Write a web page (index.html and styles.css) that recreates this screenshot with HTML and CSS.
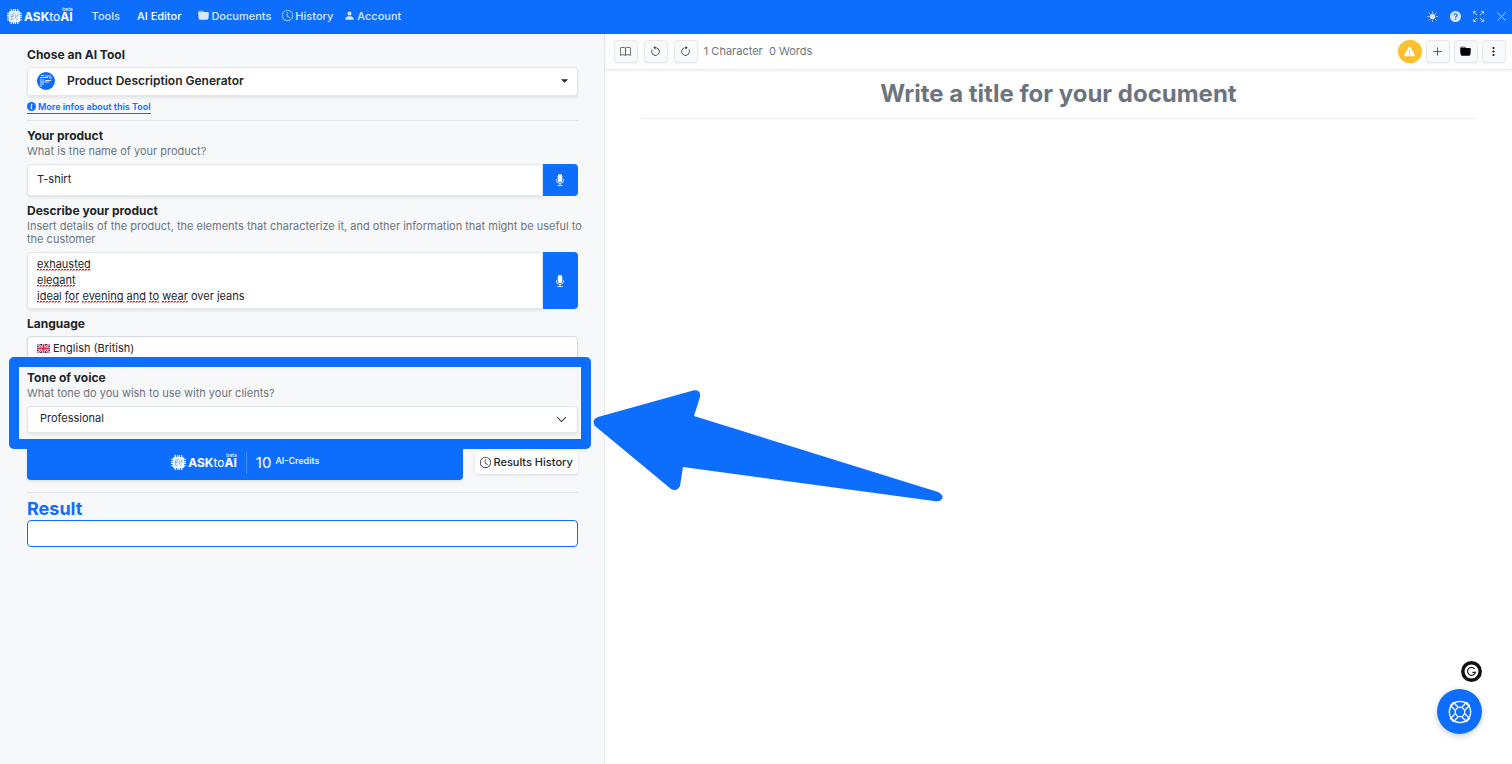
FILE: index.html
```html
<!doctype html>
<html lang="en">
<head>
	<meta charset="utf-8">
	<meta name="viewport" content="width=device-width, initial-scale=1.0">
	<title>AI Editor - ASKtoAI</title>
	<link rel="stylesheet" href="styles.css">
</head>

<body>

	<!-- shared icons -->
	<svg class="sprite" aria-hidden="true">
		<symbol id="i-chip" viewBox="0 0 16 16">
			<path fill="none" stroke="currentColor" stroke-width="1.2" d="M4.5 0v16M7 0v3M9 0v3M11.500 0v16M7 13v3M9 13v3M0 4.500h16M0 7h3M0 9h3M13 7h3M13 9h3M0 11.500h16"/>
			<rect x="2" y="2" width="12" height="12" rx="2" fill="currentColor"/>
			<path fill="none" stroke="#0d6efd" stroke-width=".6" d="M4.500 5v6h3M4.500 8h2V4.500h2M8 6.500h1.500v3H8M11.500 4.500v4M11.500 11h-2"/>
		</symbol>
		<symbol id="i-clock" viewBox="0 0 16 16">
			<path fill="currentColor" d="M8 3.500a.5.5 0 0 0-1 0V9a.5.5 0 0 0 .252.434l3.500 2a.5.5 0 0 0 .496-.868L8 8.710V3.500z"/>
			<path fill="currentColor" d="M8 16A8 8 0 1 0 8 0a8 8 0 0 0 0 16zm7-8A7 7 0 1 1 1 8a7 7 0 0 1 14 0z"/>
		</symbol>
		<symbol id="i-folder" viewBox="0 0 16 16">
			<path fill="currentColor" d="M9.828 3h3.982a2 2 0 0 1 1.992 2.181l-.637 7A2 2 0 0 1 13.174 14H2.825a2 2 0 0 1-1.991-1.819l-.637-7a2 2 0 0 1 .342-1.310L.5 3a2 2 0 0 1 2-2h3.672a2 2 0 0 1 1.414.586l.828.828A2 2 0 0 0 9.828 3zm-8.322.120C1.720 3.042 1.950 3 2.190 3h5.396l-.707-.707A1 1 0 0 0 6.172 2H2.500a1 1 0 0 0-1 .981l.006.139z"/>
		</symbol>
		<symbol id="i-mic" viewBox="0 0 16 16">
			<path fill="currentColor" d="M5 3a3 3 0 0 1 6 0v5a3 3 0 0 1-6 0V3z"/>
			<path fill="currentColor" d="M3.500 6.500A.5.5 0 0 1 4 7v1a4 4 0 0 0 8 0V7a.5.5 0 0 1 1 0v1a5 5 0 0 1-4.500 4.975V15h3a.5.5 0 0 1 0 1h-7a.5.5 0 0 1 0-1h3v-2.025A5 5 0 0 1 3 8V7a.5.5 0 0 1 .5-.5z"/>
		</symbol>
		<symbol id="i-rotate" viewBox="0 0 16 16">
			<path fill="currentColor" fill-rule="evenodd" d="M8 3a5 5 0 1 1-4.546 2.914.5.5 0 0 0-.908-.417A6 6 0 1 0 8 2v1z"/>
			<path fill="currentColor" d="M8 4.466V.534a.25.25 0 0 0-.410-.192L5.230 2.308a.25.25 0 0 0 0 .384l2.360 1.966A.25.25 0 0 0 8 4.466z"/>
		</symbol>
	</svg>

	<header class="topbar">
		<a class="logo" href="#">
			<svg class="logo-chip"><use href="#i-chip"/></svg>
			<span class="logo-text"><b>ASK</b>to<b>AI</b><small>beta</small></span>
		</a>
		<nav>
			<a href="#">Tools</a>
			<a href="#" class="active">AI Editor</a>
			<a href="#"><svg class="icon"><use href="#i-folder"/></svg>Documents</a>
			<a href="#"><svg class="icon"><use href="#i-clock"/></svg>History</a>
			<a href="#"><svg class="icon" viewBox="0 0 16 16"><path fill="currentColor" d="M3 14s-1 0-1-1 1-4 6-4 6 3 6 4-1 1-1 1H3zm5-6a3 3 0 1 0 0-6 3 3 0 0 0 0 6z"/></svg>Account</a>
		</nav>
		<div class="window-tools">
			<button type="button" aria-label="Light mode">
				<svg class="icon" viewBox="0 0 16 16"><circle cx="8" cy="8" r="4" fill="currentColor"/><path fill="none" stroke="currentColor" stroke-linecap="round" d="M8 .5v2M8 13.500v2M.5 8h2M13.500 8h2M2.700 2.700l1.400 1.400M11.900 11.900l1.400 1.400M13.300 2.700l-1.400 1.400M4.100 11.900l-1.400 1.400"/></svg>
			</button>
			<button type="button" aria-label="Help">
				<svg class="icon" viewBox="0 0 16 16"><circle cx="8" cy="8" r="8" fill="currentColor"/><path fill="none" stroke="#0d6efd" stroke-width="1.800" d="M5.800 6.200c0-3 4.500-2.800 4.500-.2 0 1.600-2.200 1.500-2.200 3.500"/><circle cx="8.100" cy="11.600" r="1.100" fill="#0d6efd"/></svg>
			</button>
			<button type="button" aria-label="Full screen">
				<svg class="icon" viewBox="0 0 16 16"><path fill="none" stroke="currentColor" stroke-width="1.200" d="M.6 4.500V.6h3.900M.8.8l5 5M11.500.6h3.900v3.900M15.200.8l-5 5M.6 11.500v3.900h3.900M.8 15.200l5-5M15.400 11.500v3.900h-3.900M15.200 15.200l-5-5"/></svg>
			</button>
			<button type="button" aria-label="Close">
				<svg class="icon" viewBox="0 0 16 16"><path fill="none" stroke="currentColor" stroke-width="1.200" stroke-linecap="round" d="M2.500 2.500l11 11M13.500 2.500l-11 11"/></svg>
			</button>
		</div>
	</header>

	<main>
		<form class="panel">
			<section class="tool-select">
				<h2>Chose an AI Tool</h2>
				<button type="button" class="tool-button box">
					<svg class="tool-icon" viewBox="0 0 18 18"><circle cx="9" cy="9" r="9" fill="#0d6efd"/><path fill="none" stroke="#cfe2ff" d="M4 3.500h3M8 4h6M3 5.500h8M12 6h3M3 8h4M8 8.500h6M3 10h9M3 12h4M3 14h2"/></svg>
					<span>Product Description Generator</span>
					<svg class="caret" viewBox="0 0 8 4"><path fill="currentColor" d="M0 0h8L4 4z"/></svg>
				</button>
				<a class="more" href="#"><svg viewBox="0 0 16 16"><circle cx="8" cy="8" r="8" fill="currentColor"/><path fill="none" stroke="#fff" stroke-width="1.800" d="M6.500 7h1.700L7.500 12h1.800"/><circle cx="8.500" cy="4.400" r="1.200" fill="#fff"/></svg> More infos about this Tool</a>
			</section>

			<section class="field">
				<label for="product">Your product</label>
				<p>What is the name of your product?</p>
				<div class="input-group">
					<input class="box" type="text" id="product" value="T-shirt">
					<button type="button" aria-label="Dictate name"><svg class="icon"><use href="#i-mic"/></svg></button>
				</div>
			</section>

			<section class="field">
				<label for="details">Describe your product</label>
				<p>Insert details of the product, the elements that characterize it, and other information that might be useful to the customer</p>
				<div class="input-group">
					<textarea class="box" id="details" rows="3" spellcheck="false">exhausted
elegant
ideal for evening and to wear over jeans</textarea>
					<button type="button" aria-label="Dictate description"><svg class="icon"><use href="#i-mic"/></svg></button>
				</div>
			</section>

			<section class="field language">
				<label for="language">Language</label>
				<div class="flag-select box">
					<svg class="flag" viewBox="0 0 13 9"><rect width="13" height="9" rx="1" fill="#2b3f87"/><path stroke="#fff" stroke-width="2" d="M0 0l13 9M13 0L0 9"/><path stroke="#d32f45" stroke-width=".9" d="M0 0l13 9M13 0L0 9"/><path stroke="#fff" stroke-width="3" d="M6.500 0v9M0 4.500h13"/><path stroke="#d32f45" stroke-width="1.800" d="M6.500 0v9M0 4.500h13"/></svg>
					<select id="language"><option>English (British)</option></select>
				</div>
			</section>

			<section class="field tone">
				<label for="tone">Tone of voice</label>
				<p>What tone do you wish to use with your clients?</p>
				<select class="box" id="tone"><option>Professional</option></select>
				<svg class="arrow" viewBox="0 0 350 112" aria-hidden="true"><path d="M5 27L101 .3Q108-.5 107 7L101 26L345 102Q351 105 349 109Q347 112 341 111L90 77L87 96Q84 102 78 99L2 36Q-2 30 5 27z"/></svg>
			</section>

			<div class="actions">
				<button type="submit" class="ask">
					<span class="logo">
						<svg class="logo-chip"><use href="#i-chip"/></svg>
						<span class="logo-text"><b>ASK</b>to<b>AI</b><small>beta</small></span>
					</span>
					<span class="credits">10 <small>AI-Credits</small></span>
				</button>
				<button type="button" class="results"><svg class="icon"><use href="#i-clock"/></svg>Results History</button>
			</div>

			<section class="result">
				<h3><label for="result">Result</label></h3>
				<input type="text" id="result">
			</section>
		</form>

		<section class="editor">
			<div class="toolbar">
				<div class="tools-left">
					<button type="button" aria-label="Read"><svg class="icon" viewBox="0 0 16 16"><path fill="none" stroke="currentColor" d="M8 3C6.500 1.700 2.500 1.800.5 2.800v10.700C3 12.500 6.500 12.300 8 13.700c1.500-1.400 5-1.200 7.500-.2V2.800C13.500 1.800 9.500 1.700 8 3zV13.500"/></svg></button>
					<button type="button" aria-label="Undo"><svg class="icon"><use href="#i-rotate"/></svg></button>
					<button type="button" aria-label="Redo"><svg class="icon flip"><use href="#i-rotate"/></svg></button>
					<span class="count">1 Character&nbsp; 0 Words</span>
				</div>
				<div class="tools-right">
					<button type="button" class="warning" aria-label="Warning"><svg class="icon" viewBox="0 0 16 16"><path fill="currentColor" fill-rule="evenodd" d="M8.982 1.566a1.130 1.130 0 0 0-1.960 0L.165 13.233c-.457.778.091 1.767.980 1.767h13.713c.889 0 1.438-.990.980-1.767L8.982 1.566zM8 5c.535 0 .954.462.900.995l-.350 3.507a.552.552 0 0 1-1.100 0L7.100 5.995A.905.905 0 0 1 8 5zm.002 6a1 1 0 1 1 0 2 1 1 0 0 1 0-2z"/></svg></button>
					<button type="button" aria-label="New"><svg class="icon" viewBox="0 0 16 16"><path stroke="currentColor" d="M8 2v12M2 8h12"/></svg></button>
					<button type="button" aria-label="Open"><svg class="icon dark"><use href="#i-folder"/></svg></button>
					<button type="button" aria-label="More"><svg class="icon dark" viewBox="0 0 16 16"><circle cx="8" cy="3" r="1.500"/><circle cx="8" cy="8" r="1.500"/><circle cx="8" cy="13" r="1.500"/></svg></button>
				</div>
			</div>
			<input class="doc-title" type="text" placeholder="Write a title for your document" aria-label="Document title">
		</section>
	</main>

	<div class="floating">
		<button type="button" class="grammar" aria-label="Grammar check"><svg viewBox="0 0 21 21"><circle cx="10.500" cy="10.500" r="8.700" fill="#fff" stroke="#111" stroke-width="3.500"/><path fill="none" stroke="#222" stroke-width="1.200" d="M13.600 7.800a4 4 0 1 0 .8 3.500h-3"/></svg></button>
		<button type="button" class="support" aria-label="Support"><svg viewBox="0 0 24 24"><g fill="none" stroke="currentColor" stroke-width="1.300"><circle cx="12" cy="12" r="10.700"/><circle cx="12" cy="12" r="4.800"/><path d="M7 10L2.500 5.500l3-3L10 7M14 7l4.500-4.500 3 3L17 10M17 14l4.500 4.500-3 3L14 17M10 17l-4.500 4.500-3-3L7 14"/></g></svg></button>
	</div>

</body>
</html>
```
FILE: styles.css
```css
* {
	box-sizing: border-box;
}
body {
	margin: 0;
	min-height: 100vh;
	display: flex;
	flex-direction: column;
	font-family: Inter, sans-serif;
	font-size: 11px;
	color: #212529;
	background: #fff;
}
h2, h3, p {
	margin: 0;
}
button, input, select, textarea {
	font: inherit;
	color: inherit;
	margin: 0;
}
button {
	border: 0;
	padding: 0;
	background: none;
	cursor: pointer;
}
svg {
	flex: none;
}
.sprite {
	position: absolute;
	width: 0;
	height: 0;
}
.icon {
	width: 11px;
	height: 11px;
}

/* top bar */
.topbar {
	display: flex;
	align-items: center;
	height: 34px;
	padding: 0 5px 1px 7px;
	background: #0d6efd;
	color: #fff;
}
.logo {
	display: flex;
	align-items: center;
	gap: 2px;
	color: #fff;
	text-decoration: none;
}
.logo-chip {
	width: 15px;
	height: 15px;
}
.logo-text {
	position: relative;
	font-size: 12px;
	line-height: 16px;
}
.logo-text small {
	position: absolute;
	right: 0;
	top: -4px;
	font-size: 5px;
	line-height: 8px;
}
nav {
	display: flex;
	gap: 11px;
	margin-left: 19px;
	padding-bottom: 2px;
}
nav a {
	display: flex;
	align-items: center;
	gap: 2px;
	color: #d7e6ff;
	font-weight: 500;
	text-decoration: none;
}
nav a.active {
	color: #fff;
	margin: 0 6px;
}
.window-tools {
	display: flex;
	gap: 12px;
	margin-left: auto;
	color: #d7e6ff;
}
.window-tools button {
	display: flex;
}

main {
	flex: 1;
	display: grid;
	grid-template-columns: 2fr 3fr;
}

/* left side */
.panel {
	padding: 13px 26px 13px 27px;
	background: #f7f8fa;
	border-right: 1px solid #e6e8eb;
}
.box {
	display: block;
	width: 100%;
	border: 1px solid #e4e7ea;
	border-radius: 4px;
	background: #fff;
	box-shadow: 0 2px 3px rgba(0, 0, 0, .08);
}
h2, .field label {
	display: block;
	font-size: 12px;
	font-weight: 700;
	line-height: 15px;
}
.field p {
	color: #6c757d;
	line-height: 13px;
	margin: 2px -10px 0 0;
}
.tool-select {
	padding-bottom: 6px;
	margin-bottom: 7px;
	border-bottom: 1px solid #e3e5e8;
}
.tool-button {
	display: flex;
	align-items: center;
	height: 29px;
	margin: 5px 0 4px;
	padding: 0 9px 2px;
	font-size: 12px;
	font-weight: 600;
}
.tool-icon {
	width: 18px;
	height: 18px;
	margin-right: 12px;
}
.caret {
	width: 7px;
	height: 4px;
	margin-left: auto;
}
.more {
	display: inline-flex;
	align-items: center;
	gap: 2px;
	color: #0d6efd;
	font-size: 9px;
	font-weight: 600;
	line-height: 12px;
	text-decoration: none;
	border-bottom: 1px solid #0d6efd;
}
.more svg {
	width: 9px;
	height: 9px;
}
.field {
	margin-bottom: 7px;
}
.input-group {
	display: flex;
	margin-top: 6px;
}
.input-group .box {
	flex: 1;
	border-radius: 4px 0 0 4px;
	padding: 3px 9px 5px;
	line-height: 16px;
}
.input-group input {
	height: 32px;
}
.input-group textarea {
	height: 57px;
	resize: none;
	overflow: hidden;
	/* spelling marks */
	background: #fff url("data:image/svg+xml,%3Csvg xmlns='http://www.w3.org/2000/svg' width='220' height='56'%3E%3Cg fill='none' stroke='%23e02020' stroke-dasharray='2 1'%3E%3Cpath d='M9 16.500h54M9 32.500h38M9 48.500h24M37 48.500h14M54 48.500h42M99 48.500h19M121 48.500h10M134 48.500h26'/%3E%3Cpath stroke-dashoffset='1' stroke-opacity='.5' d='M9 17.500h54M9 33.500h38M9 49.500h24M37 49.500h14M54 49.500h42M99 49.500h19M121 49.500h10M134 49.500h26'/%3E%3C/g%3E%3C/svg%3E") no-repeat;
}
.input-group button {
	display: flex;
	align-items: center;
	justify-content: center;
	width: 35px;
	color: #fff;
	background: #0d6efd;
	border-radius: 0 4px 4px 0;
}
.input-group .icon {
	width: 12px;
	height: 12px;
}
.flag-select {
	display: flex;
	align-items: center;
	gap: 3px;
	height: 27px;
	margin-top: 5px;
	padding: 0 9px 3px;
	border-color: #d5dbe5;
}
.flag {
	width: 13px;
	height: 9px;
}
.flag-select select {
	flex: 1;
	border: 0;
	padding: 0;
	background: none;
	appearance: none;
}

/* highlighted field */
.tone {
	position: relative;
	margin: 0 0 12px;
}
.tone::after {
	content: "";
	position: absolute;
	inset: -13px -13px -16px -18px;
	border: 10px solid #0d6efd;
	border-radius: 5px;
	pointer-events: none;
}
.tone select {
	height: 27px;
	margin-top: 6px;
	padding: 0 12px 3px;
	appearance: none;
	background: #fff url("data:image/svg+xml,%3Csvg xmlns='http://www.w3.org/2000/svg' viewBox='0 0 16 16'%3E%3Cpath fill='none' stroke='%23343a40' stroke-width='1.500' stroke-linecap='round' stroke-linejoin='round' d='M2 5l6 6 6-6'/%3E%3C/svg%3E") no-repeat right 10px center / 11px 11px;
}
.arrow {
	position: absolute;
	left: calc(100% + 15px);
	top: 20px;
	width: 350px;
	height: 112px;
	overflow: visible;
	fill: #0d6efd;
	z-index: 2;
	pointer-events: none;
}

.actions {
	display: flex;
	align-items: center;
	gap: 12px;
	padding-bottom: 12px;
	border-bottom: 1px solid #e3e5e8;
}
.ask {
	flex: 1;
	display: flex;
	align-items: center;
	justify-content: center;
	height: 35px;
	color: #fff;
	background: #0d6efd;
	border-radius: 4px;
	box-shadow: 0 2px 3px rgba(0, 0, 0, .08);
}
.credits {
	display: flex;
	gap: 4px;
	margin-left: 9px;
	padding-left: 9px;
	border-left: 1px solid #4b93ff;
	font-size: 15px;
	line-height: 22px;
}
.credits small {
	font-size: 9px;
	line-height: 18px;
	font-weight: 500;
}
.results {
	display: flex;
	align-items: center;
	gap: 2px;
	height: 23px;
	padding: 0 5px 1px;
	font-weight: 500;
	background: #fff;
	border-radius: 4px;
	box-shadow: 0 1px 3px rgba(0, 0, 0, .12);
}
.result h3 {
	margin-top: 5px;
	color: #0d6efd;
	font-size: 18px;
	line-height: 22px;
}
.result input {
	display: block;
	width: 100%;
	height: 27px;
	padding: 0 9px;
	border: 1px solid #0d6efd;
	border-radius: 4px;
	background: #fff;
}

/* right side */
.toolbar {
	display: flex;
	align-items: center;
	justify-content: space-between;
	height: 36px;
	padding: 0 6px 1px 9px;
	border-bottom: 1px solid #e9ebed;
	box-shadow: 0 1px 3px rgba(0, 0, 0, .06);
}
.tools-left, .tools-right {
	display: flex;
	align-items: center;
	gap: 6px;
}
.tools-right {
	gap: 4px;
}
.toolbar button {
	display: flex;
	align-items: center;
	justify-content: center;
	width: 24px;
	height: 23px;
	background: #f8f9fa;
	border: 1px solid #e6e9ec;
	border-radius: 4px;
	box-shadow: 0 1px 2px rgba(0, 0, 0, .06);
}
.flip {
	transform: scaleX(-1);
}
.dark {
	color: #000;
}
.count {
	color: #6c757d;
}
.toolbar .warning {
	color: #fff;
	background: #fbc02d;
	border: 0;
	border-radius: 50%;
}
.doc-title {
	display: block;
	width: calc(100% - 72px);
	height: 49px;
	margin: 0 36px;
	padding: 0 0 2px;
	border: 0;
	border-bottom: 1px solid #e9ebed;
	background: none;
	font-size: 24px;
	font-weight: 700;
	text-align: center;
}
.doc-title::placeholder {
	color: #6c757d;
	opacity: 1;
}

.floating {
	position: fixed;
	right: 30px;
	bottom: 30px;
	display: flex;
	flex-direction: column;
	align-items: flex-end;
	gap: 7px;
}
.grammar svg {
	display: block;
	width: 21px;
	height: 21px;
}
.support {
	display: flex;
	align-items: center;
	justify-content: center;
	width: 45px;
	height: 45px;
	color: #fff;
	background: #0d6efd;
	border-radius: 50%;
	box-shadow: 0 2px 6px rgba(0, 0, 0, .2);
}
.support svg {
	width: 24px;
	height: 24px;
}
```
